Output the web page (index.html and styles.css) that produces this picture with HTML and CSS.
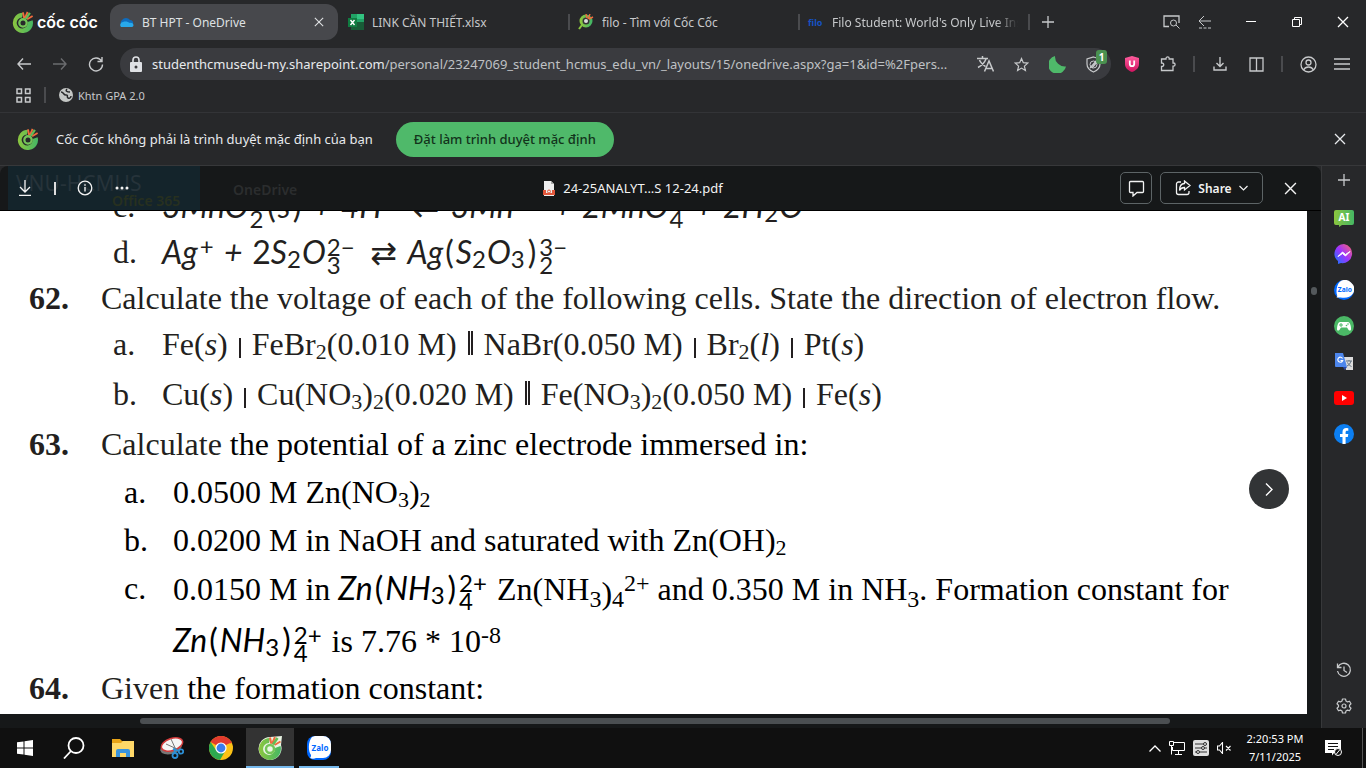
FILE: index.html
```html
<!DOCTYPE html>
<html lang="vi">
<head>
<meta charset="UTF-8">
<meta name="viewport" content="width=device-width, initial-scale=1.0">
<title>BT HPT - OneDrive</title>
<link rel="stylesheet" href="styles.css">
</head>
<body>
    <!-- shared shapes -->
    <svg width="0" height="0" class="defs">
        <defs>
            <linearGradient id="lime" x1="0" x2="1"><stop offset="0" stop-color="#8cc63f"/><stop offset="1" stop-color="#45b764"/></linearGradient>
            <linearGradient id="msg" x1="0" y1="1" x2="1" y2="0"><stop offset="0" stop-color="#0a7cff"/><stop offset=".5" stop-color="#a033ff"/><stop offset="1" stop-color="#ff6968"/></linearGradient>
            <linearGradient id="pink" x1="0" y1="0" x2="0" y2="1"><stop offset="0" stop-color="#ff5d9e"/><stop offset="1" stop-color="#d0135f"/></linearGradient>
        </defs>
        <symbol id="coc" viewBox="0 0 24 24">
            <path d="M12 2A11 11 0 1 0 22.500 10L17 12A6 6 0 1 1 11 7Z" fill="url(#lime)"/>
            <path d="M12 1.500l1.200 6M17 1l-3 7M22.500 5.500L16.500 9" stroke="#f26a3d" stroke-width="2" fill="none"/>
            <path d="M19.500 2L15 8.500" stroke="#62bd55" stroke-width="2.500"/>
            <circle cx="12" cy="13" r="4" fill="none" stroke="#74c558" stroke-width="2.500"/>
        </symbol>
        <symbol id="x" viewBox="0 0 12 12"><path d="M1 1l10 10M11 1L1 11" stroke="currentColor" stroke-width="1.300" fill="none"/></symbol>
        <symbol id="zalo" viewBox="0 0 24 24">
            <rect x="0" y="0" width="24" height="24" rx="8" fill="#0068ff"/>
            <path d="M8 0h8a8 8 0 0 1 8 8v6a8 8 0 0 1-8 8H9c-2 1-4 1-6 0 1-1 1-2 1-3-3-4-3-13 1-18z" fill="#fff"/>
            <text x="13" y="14.500" text-anchor="middle" class="zalo-text">Zalo</text>
        </symbol>
    </svg>

    <header class="tabbar">
        <div class="brand">
            <svg width="22" height="22"><use href="#coc"/></svg>
            <span>cốc cốc</span>
        </div>
        <div class="tabs">
            <div class="tab active">
                <svg width="16" height="16" viewBox="0 0 16 16"><path d="M4 12a4 4 0 0 1 0-6 5 5 0 0 1 8 0 3 3 0 0 1 3 4z" fill="#0f6cbd"/><path d="M3 13a3 3 0 0 1 2-5c3-1 5 0 7 1 3-1 5 3 2 4z" fill="#28a8ea"/></svg>
                <span class="tab-title">BT HPT - OneDrive</span>
                <button class="tab-close" aria-label="Close"><svg width="10" height="10"><use href="#x"/></svg></button>
            </div>
            <div class="tab">
                <svg width="16" height="16" viewBox="0 0 16 16"><path d="M3 0h13v16H3z" fill="#21a366"/><path d="M9 0h7v5H9z" fill="#33c481"/><path d="M9 8h7v8H3v-3h6z" fill="#185c37"/><path d="M0 4h9v9H0z" fill="#107c41"/><path d="M2.500 6l4 5M6.500 6l-4 5" stroke="#fff" stroke-width="1.400"/></svg>
                <span class="tab-title">LINK CẦN THIẾT.xlsx</span>
            </div>
            <div class="tab">
                <svg width="16" height="16" viewBox="0 0 16 16"><path d="M4 11l-3 4" stroke="#8cc63f" stroke-width="2"/><circle cx="8" cy="7" r="5" fill="#333" stroke="url(#lime)" stroke-width="3"/><circle cx="8" cy="7" r="2" fill="#ddd"/><path d="M8 0l1 4M12 0l-2 5M15 3l-4 2" stroke="#f26a3d" stroke-width="1.400"/></svg>
                <span class="tab-title">filo - Tìm với Cốc Cốc</span>
            </div>
            <div class="tab">
                <span class="filo">filo</span>
                <span class="tab-title fade">Filo Student: World's Only Live Instant</span>
            </div>
        </div>
        <button class="new-tab" aria-label="New tab"><svg width="12" height="12" viewBox="0 0 12 12"><path d="M6 0v12M0 6h12" stroke="currentColor" stroke-width="1.300"/></svg></button>
        <div class="window-tools">
            <button aria-label="Search tabs"><svg width="17" height="14" viewBox="0 0 17 14"><path d="M6 11.500H1V1h15v7" fill="none" stroke="currentColor" stroke-width="1.300"/><circle cx="10.500" cy="8" r="3" fill="none" stroke="currentColor"/><path d="M13 10l3.500 3.500" stroke="currentColor"/></svg></button>
            <button aria-label="Back list"><svg width="14" height="14" viewBox="0 0 14 14"><path d="M6 1L1 6l5 5M1 6h12" fill="none" stroke="currentColor"/><path d="M1 13h13" stroke="currentColor" stroke-dasharray="3 1.500"/></svg></button>
        </div>
        <div class="window-buttons">
            <button aria-label="Minimize"><svg width="10" height="10" viewBox="0 0 10 10"><path d="M0 4.500h10" stroke="#fff"/></svg></button>
            <button aria-label="Restore"><svg width="10" height="10" viewBox="0 0 10 10"><path d="M.5 2.500h7v7h-7zM2.500 2V.5h7v7H8" fill="none" stroke="#fff"/></svg></button>
            <button aria-label="Close window"><svg width="12" height="12"><use href="#x"/></svg></button>
        </div>
    </header>

    <nav class="toolbar">
        <button class="icon-btn" aria-label="Back"><svg width="14" height="12" viewBox="0 0 14 12"><path d="M6 .5L1 6l5 5.500M1 6h13" fill="none" stroke="currentColor" stroke-width="1.400"/></svg></button>
        <button class="icon-btn dim" aria-label="Forward"><svg width="14" height="12" viewBox="0 0 14 12"><path d="M8 .5L13 6l-5 5.500M13 6H0" fill="none" stroke="currentColor" stroke-width="1.400"/></svg></button>
        <button class="icon-btn" aria-label="Reload"><svg width="16" height="16" viewBox="0 0 16 16"><path d="M13.500 5A6.500 6.500 0 1 0 14.500 8.500M14 1v4.500H9.500" fill="none" stroke="currentColor" stroke-width="1.400"/></svg></button>
        <div class="omnibox">
            <svg width="14" height="17" viewBox="0 0 14 17"><rect x="1" y="6" width="12" height="10" rx="1" fill="#dfe1e5"/><path d="M4 7V4a3 3 0 0 1 6 0v3" fill="none" stroke="#dfe1e5" stroke-width="1.600"/><circle cx="7" cy="11" r="1.500" fill="#3a3b3f"/></svg>
            <div class="url"><b>studenthcmusedu-my.sharepoint.com</b>/personal/23247069_student_hcmus_edu_vn/_layouts/15/onedrive.aspx?ga=1&amp;id=%2Fpers...</div>
            <button class="icon-btn" aria-label="Translate"><svg width="17" height="16" viewBox="0 0 17 16"><path d="M0 2.500h11M5.500 0v2.500M9 3C7 8 4 10 1 11.500M2.500 4c1 3 4 5 6 6.500M7.500 15.500L12 5l4.500 10.500M9 12.500h6" fill="none" stroke="currentColor" stroke-width="1.500"/></svg></button>
            <button class="icon-btn" aria-label="Bookmark"><svg width="15" height="15" viewBox="0 0 15 15"><path d="M7.500 1.500l1.800 4.200 4.500.4-3.400 3 1 4.400-3.900-2.400-3.900 2.400 1-4.400-3.400-3 4.500-.4z" fill="none" stroke="currentColor" stroke-width="1.200"/></svg></button>
            <button class="icon-btn" aria-label="Dark mode"><svg width="17" height="17" viewBox="0 0 17 17"><path d="M6 0a10 10 0 0 0 11 10.500A9 9 0 1 1 6 0z" fill="#4fb96a"/></svg></button>
            <button class="icon-btn" aria-label="Blocker"><svg width="15" height="17" viewBox="0 0 15 17"><path d="M7.500 1L14 3v5c0 4-3 6.500-6.500 8C4 14.500 1 12 1 8V3z" fill="none" stroke="currentColor" stroke-width="1.200"/><circle cx="7.500" cy="8.500" r="3.500" fill="none" stroke="currentColor"/><path d="M4 12l7-8M6 12l5-6" stroke="currentColor" stroke-width="1.200"/></svg><span class="badge">1</span></button>
        </div>
        <button class="icon-btn" aria-label="Shield"><svg width="14" height="16" viewBox="0 0 14 16"><path d="M7 0l7 2v6c0 4-3 6.500-7 8-4-1.500-7-4-7-8V2z" fill="url(#pink)"/><path d="M4.800 4.500V8a2.200 2.200 0 0 0 4.400 0V4.500" fill="none" stroke="#fff" stroke-width="1.800"/></svg></button>
        <button class="icon-btn" aria-label="Extensions"><svg width="16" height="16" viewBox="0 0 16 16"><path d="M1.500 3H6V2.500a1.600 1.600 0 0 1 3.200 0V3H13v4h.5a1.600 1.600 0 0 1 0 3.200H13v4.300H1.500v-4H2a1.600 1.600 0 0 0 0-3.500h-.5z" fill="none" stroke="currentColor" stroke-width="1.300"/></svg></button>
        <span class="sep"></span>
        <button class="icon-btn" aria-label="Downloads"><svg width="14" height="14" viewBox="0 0 14 14"><path d="M7 0v9M3.500 6L7 9.500 10.500 6M1 9.500V13h12V9.500" fill="none" stroke="currentColor" stroke-width="1.400"/></svg></button>
        <button class="icon-btn" aria-label="Split view"><svg width="15" height="15" viewBox="0 0 15 15"><path d="M1 1h13v13H1zM7.500 1v13" fill="none" stroke="currentColor" stroke-width="1.300"/></svg></button>
        <span class="sep"></span>
        <button class="icon-btn" aria-label="Profile"><svg width="17" height="17" viewBox="0 0 17 17"><g fill="none" stroke="currentColor" stroke-width="1.300"><circle cx="8.500" cy="8.500" r="7.500"/><circle cx="8.500" cy="6.500" r="2.500"/><path d="M3.500 14c2-4 8-4 10 0"/></g></svg></button>
        <button class="icon-btn menu" aria-label="Menu"><svg width="16" height="12" viewBox="0 0 16 12"><path d="M0 1h16M0 6h16M0 11h16" stroke="currentColor" stroke-width="1.400"/></svg></button>
    </nav>

    <div class="bookmarks">
        <svg width="15" height="15" viewBox="0 0 15 15"><path d="M1 1h4.500v4.500H1zM9.500 1H14v4.500H9.500zM1 9.500h4.500V14H1zM9.500 9.500H14V14H9.500z" fill="none" stroke="currentColor" stroke-width="1.500"/></svg>
        <span class="sep"></span>
        <a href="#"><svg width="14" height="14" viewBox="0 0 14 14"><circle cx="7" cy="7" r="7" fill="#c4c7c5"/><path d="M2 4c3 0 2 3 5 3s0 2 2 3 3-1 3-2M8 1c-2 2 0 3 3 3" fill="none" stroke="#27282a" stroke-width="1.500"/></svg>Khtn GPA 2.0</a>
    </div>

    <div class="infobar">
        <svg width="22" height="22"><use href="#coc"/></svg>
        <span>Cốc Cốc không phải là trình duyệt mặc định của bạn</span>
        <button class="default-btn">Đặt làm trình duyệt mặc định</button>
        <button class="info-close" aria-label="Close"><svg width="12" height="12"><use href="#x"/></svg></button>
    </div>

    <main>
        <section class="viewer">
            <div class="viewer-bar">
                <div class="ghost"><span>VNU-HCMUS</span><small>Office 365</small></div>
                <div class="ghost-app">OneDrive</div>
                <div class="left-tools">
                    <button aria-label="Download"><svg width="12" height="16" viewBox="0 0 12 16"><path d="M6 0v12M1 7l5 5 5-5M0 15.300h12" fill="none" stroke="currentColor" stroke-width="1.300"/></svg></button>
                    <span class="bar-line"></span>
                    <button aria-label="Info"><svg width="16" height="16" viewBox="0 0 16 16"><circle cx="8" cy="8" r="6.800" fill="none" stroke="currentColor" stroke-width="1.300"/><path d="M8 7v4.500M8 4.300v1.400" stroke="currentColor" stroke-width="1.400"/></svg></button>
                    <button aria-label="More"><svg width="14" height="4" viewBox="0 0 14 4"><g fill="currentColor"><circle cx="2" cy="2" r="1.500"/><circle cx="7" cy="2" r="1.500"/><circle cx="12" cy="2" r="1.500"/></g></svg></button>
                </div>
                <div class="file-name">
                    <svg width="12" height="15" viewBox="0 0 12 15"><path d="M1 0h7l3 3v12H1z" fill="#eee"/><path d="M8 0l3 3H8z" fill="#aaa"/><path d="M0 9h3v5H0zM9 9h3v5H9zM3 12h6v2H3z" fill="#e2573b"/><circle cx="6" cy="10.500" r="1.500" fill="none" stroke="#e2573b"/></svg>
                    24-25ANALYT...S 12-24.pdf
                </div>
                <button class="outlined comment" aria-label="Comment"><svg width="17" height="17" viewBox="0 0 17 17"><path d="M2.500 1.500h12a1 1 0 0 1 1 1v9a1 1 0 0 1-1 1H9l-4 3.500v-3.500H2.500a1 1 0 0 1-1-1v-9a1 1 0 0 1 1-1z" fill="none" stroke="currentColor" stroke-width="1.300"/></svg></button>
                <button class="outlined share"><svg width="16" height="16" viewBox="0 0 16 16"><path d="M6 2H3.500A2 2 0 0 0 1.500 4v8.500a2 2 0 0 0 2 2H12a2 2 0 0 0 2-2V11M9.500 1L15 5.500 9.500 10V7.500C7 7.500 5.500 8.500 4.500 10.500 4.500 6.500 6 3.700 9.500 3.500z" fill="none" stroke="currentColor" stroke-width="1.300"/></svg>Share<svg width="9" height="6" viewBox="0 0 9 6"><path d="M.5 1l4 4 4-4" fill="none" stroke="currentColor" stroke-width="1.200"/></svg></button>
                <button class="viewer-close" aria-label="Close file"><svg width="13" height="13"><use href="#x"/></svg></button>
            </div>
            <div class="pages">
                <article class="page">
                    <div class="line sub"><span class="num">c.</span><p class="math">3MnO<span class="ss"><i>−</i><i>2</i></span><u>(</u>s<u>)</u> <span class="op">+</span> 4H<sup>+</sup> <span class="arrows">⇌</span> 3Mn<sup>2+</sup> <span class="op">+</span> 2MnO<span class="ss"><i>−</i><i>4</i></span> <span class="op">+</span> 2H<sub>2</sub>O</p></div>
                    <div class="line sub"><span class="num">d.</span><p class="math">Ag<sup>+</sup> <span class="op">+</span> <i>2</i>S<sub>2</sub>O<span class="ss"><i>2−</i><i>3</i></span> <span class="arrows">⇄</span> Ag<u>(</u>S<sub>2</sub>O<sub>3</sub><u>)</u><span class="ss"><i>3−</i><i>2</i></span></p></div>
                    <div class="line"><b class="num">62.</b><p>Calculate the voltage of each of the following cells. State the direction of electron flow.</p></div>
                    <div class="line sub"><span class="num">a.</span><p>Fe(<em>s</em>) <span class="bar"></span> FeBr<sub>2</sub>(0.010 M) <span class="bar two"></span> NaBr(0.050 M) <span class="bar"></span> Br<sub>2</sub>(<em>l</em>) <span class="bar"></span> Pt(<em>s</em>)</p></div>
                    <div class="line sub loose"><span class="num">b.</span><p>Cu(<em>s</em>) <span class="bar"></span> Cu(NO<sub>3</sub>)<sub>2</sub>(0.020 M) <span class="bar two"></span> Fe(NO<sub>3</sub>)<sub>2</sub>(0.050 M) <span class="bar"></span> Fe(<em>s</em>)</p></div>
                    <div class="line loose"><b class="num">63.</b><p>Calculate <span class="ink">the potential of a zinc electrode immersed in:</span></p></div>
                    <div class="line sub inner"><span class="num">a.</span><p>0.0500 M Zn(NO<sub>3</sub>)<sub>2</sub></p></div>
                    <div class="line sub inner"><span class="num">b.</span><p>0.0200 M in NaOH and saturated with Zn(OH)<sub>2</sub></p></div>
                    <div class="line sub inner"><span class="num">c.</span><p>0.0150 M in <span class="math">Zn<u>(</u>NH<sub>3</sub><u>)</u><span class="ss"><i>2+</i><i>4</i></span></span> Zn(NH<sub class="low">3</sub><sub class="paren">)</sub><sub class="low">4</sub><sup>2+</sup> and 0.350 M in NH<sub class="low">3</sub>. Formation constant for</p></div>
                    <div class="line sub inner wrap"><span class="num"></span><p><span class="math">Zn<u>(</u>NH<sub>3</sub><u>)</u><span class="ss"><i>2+</i><i>4</i></span></span> is 7.76 * 10<sup>-8</sup></p></div>
                    <div class="line"><b class="num">64.</b><p>Given <span class="ink">the formation constant:</span></p></div>
                </article>
                <div class="v-scroll"><span></span></div>
            </div>
            <div class="h-scroll"><span></span></div>
            <button class="next" aria-label="Next file"><svg width="8" height="13" viewBox="0 0 8 13"><path d="M1 .5l6 6-6 6" fill="none" stroke="#fff" stroke-width="1.400"/></svg></button>
        </section>

        <aside class="sidebar">
            <button class="add" aria-label="Add"><svg width="12" height="12" viewBox="0 0 12 12"><path d="M6 0v12M0 6h12" stroke="currentColor" stroke-width="1.300"/></svg></button>
            <button aria-label="AI"><svg width="20" height="17" viewBox="0 0 20 17"><path d="M2 0h16a2 2 0 0 1 2 2v11a2 2 0 0 1-2 2H8l-3 2v-2H2a2 2 0 0 1-2-2V2a2 2 0 0 1 2-2z" fill="url(#lime)"/><text x="10" y="11" text-anchor="middle" class="ai-text">AI</text></svg></button>
            <button aria-label="Messenger"><svg width="20" height="20" viewBox="0 0 20 20"><path d="M10 0a9.600 9.600 0 1 1-3 19l-3 1v-3A9.600 9.600 0 0 1 10 0z" fill="url(#msg)"/><path d="M4 12.500L8.500 8l3 2.500L16 7.500 11.500 12l-3-2.500z" fill="#fff" stroke="#fff"/></svg></button>
            <button aria-label="Zalo"><svg width="20" height="20" viewBox="0 0 24 24"><circle cx="12" cy="12" r="12" fill="#0068ff"/><path d="M7 2a11 11 0 0 1 16 14c-3 5-9 6-15 5l-5 0c2-2 0-3 0-7 0-5 1-9 4-12z" fill="#fff"/><text x="13" y="14.500" text-anchor="middle" class="zalo-text">Zalo</text></svg></button>
            <button aria-label="Games"><svg width="20" height="20" viewBox="0 0 20 20"><circle cx="10" cy="10" r="10" fill="#4bb866"/><path d="M6 6h8c2 0 3 4 3 7 0 2-2 2-3 0l-1-1.500H7L6 13c-1 2-3 2-3 0 0-3 1-7 3-7z" fill="#fff"/><path d="M7 7v4M5 9h4" stroke="#4bb866"/><circle cx="12.500" cy="9.500" r=".8" fill="#4bb866"/><circle cx="14" cy="8" r=".8" fill="#4bb866"/></svg></button>
            <button aria-label="Translate page"><svg width="18" height="18" viewBox="0 0 18 18"><path d="M8 4h10v13H11z" fill="#dcdcdc"/><path d="M11 8h6M14 7v1M16 8c-1 3-2 4-4 5M12.500 9.500c1 2 2 3 4 4" stroke="#607080" fill="none"/><path d="M0 0h8l4 14H1a1 1 0 0 1-1-1z" fill="#4d86ec"/><path d="M8 14h4l-2.500 3z" fill="#2545a8"/><path d="M7.500 5.500A2.500 2.500 0 1 0 7.700 7.500H5.500" stroke="#fff" stroke-width="1.200" fill="none"/></svg></button>
            <button aria-label="YouTube"><svg width="20" height="14" viewBox="0 0 20 14"><rect width="20" height="14" rx="3" fill="#f00"/><path d="M8 4l5 3-5 3z" fill="#fff"/></svg></button>
            <button aria-label="Facebook"><svg width="20" height="20" viewBox="0 0 20 20"><circle cx="10" cy="10" r="10" fill="#0c7ff2"/><path d="M8.500 20v-7H6v-3h2.500V8c0-2.500 1.500-4 3.800-4l2 .2v2.500h-1.200c-1.100 0-1.500.7-1.500 1.400V10h2.700l-.5 3h-2.200v7z" fill="#fff"/></svg></button>
            <span class="spacer"></span>
            <button aria-label="History"><svg width="16" height="16" viewBox="0 0 16 16"><path d="M2 5A6.500 6.500 0 1 1 1.500 9M1.500 1.500V5.500H5.500M8 4.500V8.500l3 2" fill="none" stroke="currentColor" stroke-width="1.300"/></svg></button>
            <button aria-label="Settings"><svg width="16" height="16" viewBox="0 0 16 16"><path d="M6.500 1h3l.5 2 1.500.9 2-.7 1.500 2.600L13.500 7.200v1.600L15 10.200l-1.500 2.600-2-.7L10 13l-.5 2h-3L6 13l-1.500-.9-2 .7L1 10.200l1.500-1.400V7.200L1 5.800l1.500-2.600 2 .7L6 3z" fill="none" stroke="currentColor" stroke-width="1.200" stroke-linejoin="round"/><circle cx="8" cy="8" r="2" fill="none" stroke="currentColor" stroke-width="1.200"/></svg></button>
        </aside>
    </main>

    <footer class="taskbar">
        <button aria-label="Start"><svg width="16" height="16" viewBox="0 0 16 16"><path d="M0 2.300L6.500 1.400v6.100H0zM7.500 1.200L16 0v7.500H7.500zM0 8.500h6.500v6.100L0 13.700zM7.500 8.500H16V16l-8.500-1.200z" fill="#fff"/></svg></button>
        <button aria-label="Search"><svg width="22" height="22" viewBox="0 0 22 22"><circle cx="13" cy="8.500" r="7.500" fill="none" stroke="#fff" stroke-width="1.800"/><path d="M8 14l-7 7.500" stroke="#fff" stroke-width="1.800"/></svg></button>
        <button aria-label="File Explorer"><svg width="22" height="18" viewBox="0 0 22 18"><path d="M0 0h8l2 2h12v16H0z" fill="#e8a317"/><path d="M0 4h9l2-2h11v16H0z" fill="#ffd868"/><path d="M4 18v-6a2 2 0 0 1 2-2h10a2 2 0 0 1 2 2v6h-4v-4H8v4z" fill="#3a94dd"/></svg></button>
        <button aria-label="Snipping Tool"><svg width="24" height="22" viewBox="0 0 24 22"><ellipse cx="11" cy="11" rx="11" ry="6" fill="#777" transform="rotate(-15 11 11)"/><ellipse cx="12" cy="7.500" rx="11" ry="6" fill="#f5f5f5" stroke="#d33b3b" stroke-width="1.500" transform="rotate(-18 12 7.500)"/><path d="M11 2l5 11M6 7l11 5" stroke="#777"/><g fill="none" stroke="#2c8fd6" stroke-width="1.800"><circle cx="15" cy="18.500" r="2.500"/><circle cx="21" cy="14.500" r="2.200"/><path d="M15 16l-1-5M19 14l-6-2"/></g></svg></button>
        <button aria-label="Chrome"><svg width="24" height="24" viewBox="0 0 24 24"><circle cx="12" cy="12" r="12" fill="#fbc116"/><path d="M12 12L1.600 6A12 12 0 0 1 22.400 6z" fill="#e33b2e"/><path d="M1.600 6A12 12 0 0 0 11 24l5.500-9.500L12 12l-5 2z" fill="#2da94f"/><path d="M12 6.500h10.600" stroke="#e33b2e" stroke-width="1.500"/><circle cx="12" cy="12" r="5.600" fill="#fff"/><circle cx="12" cy="12" r="4.400" fill="#3b7ded"/></svg></button>
        <button class="running current" aria-label="Cốc Cốc"><svg width="24" height="24" viewBox="0 0 24 24"><path d="M12 1A11.500 11.500 0 1 0 23 9l1-9z" fill="#eaf5e4"/><use href="#coc" width="24" height="24"/></svg></button>
        <button class="running" aria-label="Zalo app"><svg width="24" height="24"><use href="#zalo"/></svg></button>
        <span class="spacer"></span>
        <div class="tray">
            <svg width="12" height="7" viewBox="0 0 12 7"><path d="M.5 6.500L6 1l5.500 5.500" fill="none" stroke="#fff" stroke-width="1.300"/></svg>
            <svg width="16" height="14" viewBox="0 0 16 14"><path d="M4.500 1.500h11v8h-12V6M.5.5h4v4h-4zM2.500 5v8.500M9.500 10v3M6 13.500h7" fill="none" stroke="#fff"/></svg>
            <svg width="16" height="16" viewBox="0 0 16 16"><rect width="16" height="16" rx="2" fill="#e0e0e0"/><path d="M2 4h12M2 8h12M2 12h12" stroke="#333"/><g fill="#e0e0e0" stroke="#333"><circle cx="12" cy="4" r="1.500"/><circle cx="10" cy="8" r="1.500"/><circle cx="5" cy="12" r="1.500"/></g></svg>
            <svg width="15" height="12" viewBox="0 0 15 12"><path d="M.5 4h2l3-3.500v11L2.500 8h-2zM9 4l4.500 4.500M13.500 4L9 8.500" fill="none" stroke="#fff" stroke-width="1.100"/></svg>
        </div>
        <div class="clock"><time>2:20:53 PM</time><time>7/11/2025</time></div>
        <button class="notify" aria-label="Notifications"><svg width="17" height="16" viewBox="0 0 17 16"><path d="M0 0h16v13H9l-2 2.500V13H0z" fill="#fff"/><path d="M3 3.500h10M3 6.500h10M3 9.500h6" stroke="#111"/><circle cx="13" cy="12" r="3.500" fill="#111" stroke="#fff"/><path d="M11 14.500l4-5" stroke="#fff"/></svg></button>
        <span class="desktop-edge"></span>
    </footer>
</body>
</html>
```
FILE: styles.css
```css
*{
box-sizing: border-box;
}

body{
margin: 0;
height: 100vh;
display: flex;
flex-direction: column;
overflow: hidden;
background: #27282a;
color: #c7c9cb;
font-family: "Noto Sans", "Open Sans", sans-serif;
font-size: 12px;
}

.defs{
position: absolute;
}

button{
display: flex;
align-items: center;
justify-content: center;
padding: 0;
border: none;
background: none;
color: inherit;
font: inherit;
}

svg{
flex: none;
}

p{
margin: 0;
}

.spacer{
flex: 1;
}

.sep{
width: 2px;
height: 16px;
margin: 0 7px;
background: #4a4b4e;
}

/* tabs */
.tabbar{
height: 44px;
display: flex;
align-items: center;
}

.brand{
width: 110px;
padding-left: 12px;
display: flex;
align-items: center;
gap: 3px;
color: white;
font-family: Inter, sans-serif;
font-size: 16px;
font-weight: 600;
}

.tabs{
display: flex;
width: 920px;
}

.tab{
flex: 1;
min-width: 0;
height: 36px;
padding: 0 10px 0 8px;
display: flex;
align-items: center;
gap: 8px;
border-right: 2px solid transparent;
background: linear-gradient(#4a4b4e, #4a4b4e) right center / 2px 16px no-repeat;
background-origin: border-box;
}

.tab.active{
background: #47484c;
border: none;
border-radius: 12px;
margin-right: 2px;
color: #dfe1e3;
}

.tab-title{
flex: 1;
white-space: nowrap;
overflow: hidden;
}

.fade{
mask-image: linear-gradient(to right, black 88%, transparent);
}

.tab-close{
width: 18px;
height: 18px;
}

.filo{
width: 16px;
color: #1652c4;
font-size: 9px;
font-weight: bold;
}

.new-tab{
width: 36px;
height: 36px;
}

.window-tools{
margin-left: auto;
display: flex;
}

.window-tools button{
width: 34px;
height: 36px;
}

.window-buttons{
display: flex;
color: white;
margin-left: 6px;
}

.window-buttons button{
width: 46px;
height: 36px;
}

/* address row */
.toolbar{
height: 40px;
padding: 0 8px 0 6px;
display: flex;
align-items: center;
}

.icon-btn{
width: 36px;
height: 32px;
position: relative;
flex: none;
}

.menu{
width: 32px;
}

.dim{
color: #6b6c6f;
}

.omnibox{
flex: 1;
min-width: 0;
height: 32px;
margin: 0 3px 0 6px;
padding-left: 9px;
display: flex;
align-items: center;
border-radius: 16px;
background: #3a3b3f;
font-size: 13px;
}

.url{
flex: 1;
min-width: 0;
margin-left: 9px;
white-space: nowrap;
overflow: hidden;
color: #bfc1c4;
}

.url b{
font-weight: normal;
color: #e8eaed;
}

.badge{
position: absolute;
top: 2px;
right: 4px;
width: 11px;
height: 14px;
border-radius: 3px;
background: #4a9150;
color: white;
font-size: 10px;
line-height: 14px;
font-weight: bold;
}

.bookmarks{
height: 29px;
padding: 0 16px 6px;
display: flex;
align-items: center;
border-bottom: 1px solid #333437;
font-size: 11px;
}

.bookmarks .sep{
margin: 0 13px;
}

.bookmarks a{
display: flex;
align-items: center;
gap: 5px;
color: inherit;
text-decoration: none;
}

.infobar{
height: 53px;
padding: 0 20px 0 17px;
display: flex;
align-items: center;
gap: 17px;
border-bottom: 1px solid #37383a;
color: #e8eaed;
font-size: 13px;
}

.default-btn{
height: 35px;
margin-left: 6px;
padding: 0 18px;
border-radius: 18px;
background: #4fb96a;
color: #12331b;
font-weight: 500;
}

.info-close{
margin-left: auto;
}

/* file viewer */
main{
flex: 1;
min-height: 0;
display: flex;
}

.viewer{
flex: 1;
min-width: 0;
display: flex;
flex-direction: column;
position: relative;
background: #161819;
border-radius: 8px 8px 0 0;
}

.viewer-bar{
height: 45px;
padding-right: 15px;
display: flex;
align-items: center;
position: relative;
border-bottom: 1px solid black;
color: #f3f3f3;
}

.viewer-bar > *{
z-index: 1;
}

/* suite header showing through the dark overlay */
.viewer-bar .ghost{
position: absolute;
left: 8px;
top: 0;
width: 192px;
height: 44px;
background: #14242b;
color: #26333a;
font-size: 21px;
padding: 3px 8px;
z-index: 0;
}

.ghost small{
position: absolute;
left: 104px;
top: 26px;
color: #27301f;
font-size: 14px;
font-weight: 600;
line-height: 18px;
white-space: nowrap;
}

.viewer-bar .ghost-app{
position: absolute;
left: 233px;
top: 14px;
color: #2b2d2e;
font-size: 14px;
font-weight: 600;
z-index: 0;
}

.left-tools{
display: flex;
align-items: center;
padding-left: 12px;
}

.left-tools button{
width: 26px;
height: 32px;
margin-right: 11px;
}

.left-tools .bar-line{
width: 2px;
height: 13px;
margin: 0 16px 0 5px;
background: #ddd;
}

.file-name{
flex: 1;
display: flex;
align-items: center;
justify-content: center;
gap: 8px;
font-size: 13px;
}

.outlined{
height: 32px;
border: 1px solid #5d6466;
border-radius: 5px;
}

.comment{
width: 32px;
margin-right: 8px;
}

.share{
width: 103px;
gap: 7px;
font-weight: 600;
}

.viewer-close{
width: 32px;
height: 32px;
margin-left: 11px;
}

.pages{
flex: 1;
min-height: 0;
display: flex;
}

.page{
flex: 1;
min-width: 0;
overflow: hidden;
display: flex;
flex-direction: column;
background: white;
color: #231f20;
font-family: "Liberation Serif", serif;
font-size: 32px;
}

.line{
flex: none;
display: flex;
height: 46px;
line-height: 46px;
padding-left: 29px;
white-space: nowrap;
}

.line:first-child{
margin-top: -28px;
}

.line:last-child{
margin-top: 2px;
}

.num{
width: 72px;
}

.sub{
padding-left: 113px;
}

.sub .num{
width: 49px;
}

.inner{
padding-left: 124px;
margin-top: 2px;
color: black;
}

.loose{
margin-top: 4px;
}

.wrap{
margin-top: 6px;
}

.ink{
color: black;
}

sub,
sup{
font-size: 24px;
line-height: 0;
}

sub{
font-size: 22px;
vertical-align: -4px;
}

sup{
vertical-align: 9px;
}

.low{
font-size: 24px;
vertical-align: -7px;
}

.paren{
font-size: 32px;
}

.math{
font-family: Lato, "Noto Sans", sans-serif;
font-style: italic;
}

.math i,
.math sub,
.math sup,
.math u{
font-style: normal;
text-decoration: none;
}

.math sub{
font-size: 24px;
margin-right: 1px;
}

.math sup{
margin: 0 1px 0 2px;
}

.math u{
margin: 0 2px;
}

.op{
margin: 0 2px;
}

.ss{
display: inline-flex;
flex-direction: column;
vertical-align: middle;
margin: 0 2px 0 1px;
font-size: 24px;
}

.ss i{
height: 18px;
line-height: 18px;
}

.arrows{
font-family: "DejaVu Sans", sans-serif;
font-style: normal;
margin: 0 4px 0 6px;
}

.bar{
display: inline-block;
width: 2px;
height: 20px;
background: #231f20;
vertical-align: -3px;
margin: 0 3px;
}

.two{
width: 5px;
height: 24px;
border: solid #231f20;
border-width: 0 2px;
background: none;
vertical-align: 0;
}

.v-scroll{
width: 14px;
padding: 76px 4px 0;
}

.v-scroll span{
display: block;
height: 8px;
border-radius: 3px;
background: #53585b;
}

.h-scroll{
height: 14px;
padding: 4px 0;
}

.h-scroll span{
display: block;
width: 78%;
height: 6px;
margin-left: 140px;
border-radius: 3px;
background: #4b4f52;
}

.next{
position: absolute;
right: 32px;
top: 303px;
width: 40px;
height: 40px;
border-radius: 50%;
background: #323436;
}

.sidebar{
width: 45px;
padding-bottom: 4px;
display: flex;
flex-direction: column;
align-items: center;
border-left: 1px solid #37383a;
}

.sidebar button{
width: 36px;
height: 36px;
}

.sidebar .add{
height: 28px;
margin-bottom: 6px;
}

.ai-text{
fill: white;
font-size: 10px;
font-weight: bold;
}

.zalo-text{
fill: #0068ff;
font-size: 8px;
font-weight: bold;
}

/* taskbar */
.taskbar{
height: 40px;
padding: 0 3px 0 1px;
display: flex;
align-items: center;
gap: 1px;
background: #101010;
color: white;
}

.taskbar button{
width: 48px;
height: 40px;
}

.running{
background: linear-gradient(#76b9ed, #76b9ed) center bottom / 40px 2px no-repeat;
}

.taskbar .current{
background-color: #333;
background-size: 48px 2px;
}

.tray{
display: flex;
align-items: center;
gap: 8px;
}

.clock{
width: 84px;
display: flex;
flex-direction: column;
line-height: 18px;
text-align: center;
font-size: 11px;
}

.taskbar .notify{
width: 30px;
margin-right: 13px;
}

.desktop-edge{
width: 1px;
height: 40px;
background: #555;
}
```
